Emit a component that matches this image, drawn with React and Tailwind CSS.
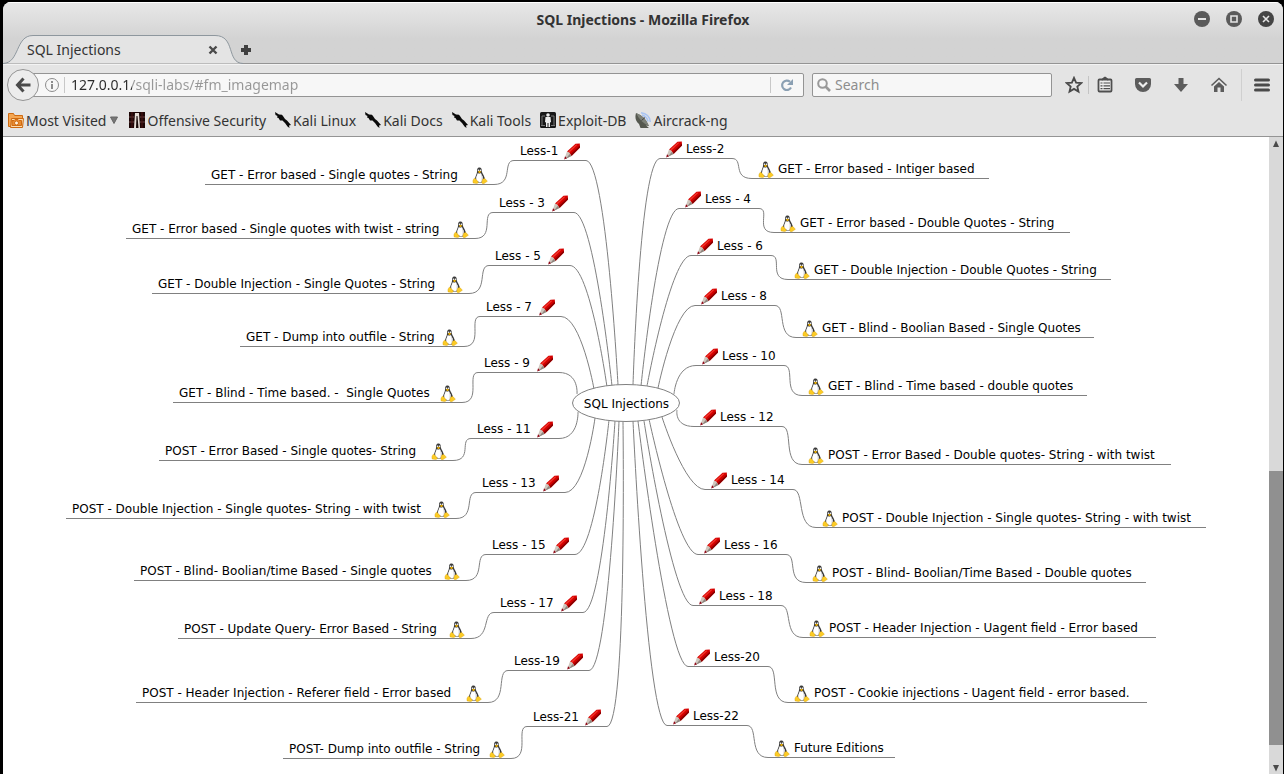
const LEFT = [
  { label: 'Less-1', x1: 511, x2: 583, y: 23, root: [615, 248], text: 'GET - Error based - Single quotes - String', cx1: 202, cx2: 491, cy: 47 },
  { label: 'Less - 3', x1: 490, x2: 571, y: 75, root: [609, 249], text: 'GET - Error based - Single quotes with twist - string', cx1: 123, cx2: 472, cy: 101 },
  { label: 'Less - 5', x1: 486, x2: 567, y: 128, root: [604, 250], text: 'GET - Double Injection - Single Quotes - String', cx1: 149, cx2: 466, cy: 156 },
  { label: 'Less - 7', x1: 477, x2: 558, y: 179, root: [591, 252], text: 'GET - Dump into outfile - String', cx1: 237, cx2: 461, cy: 209 },
  { label: 'Less - 9', x1: 475, x2: 556, y: 235, root: [574, 257], text: 'GET - Blind - Time based. -  Single Quotes', cx1: 170, cx2: 459, cy: 265 },
  { label: 'Less - 11', x1: 468, x2: 556, y: 301, root: [575, 275], text: 'POST - Error Based - Single quotes- String', cx1: 156, cx2: 450, cy: 323 },
  { label: 'Less - 13', x1: 473, x2: 562, y: 355, root: [592, 281], text: 'POST - Double Injection - Single quotes- String - with twist', cx1: 63, cx2: 453, cy: 381 },
  { label: 'Less - 15', x1: 483, x2: 572, y: 417, root: [606, 283], text: 'POST - Blind- Boolian/time Based - Single quotes', cx1: 131, cx2: 463, cy: 443 },
  { label: 'Less - 17', x1: 491, x2: 580, y: 475, root: [612, 284], text: 'POST - Update Query- Error Based - String', cx1: 175, cx2: 468, cy: 501 },
  { label: 'Less-19', x1: 505, x2: 586, y: 533, root: [616, 284], text: 'POST - Header Injection - Referer field - Error based', cx1: 133, cx2: 485, cy: 565 },
  { label: 'Less-21', x1: 524, x2: 604, y: 589, root: [620, 285], text: 'POST- Dump into outfile - String', cx1: 280, cx2: 508, cy: 621 },
]

const RIGHT = [
  { label: 'Less-2', x1: 657, x2: 729, y: 21, root: [630, 248], text: 'GET - Error based - Intiger based', cx1: 749, cx2: 986, cy: 41 },
  { label: 'Less - 4', x1: 676, x2: 756, y: 71, root: [638, 249], text: 'GET - Error based - Double Quotes - String', cx1: 771, cx2: 1067, cy: 95 },
  { label: 'Less - 6', x1: 688, x2: 768, y: 118, root: [644, 249], text: 'GET - Double Injection - Double Quotes - String', cx1: 785, cx2: 1108, cy: 142 },
  { label: 'Less - 8', x1: 692, x2: 772, y: 168, root: [655, 251], text: 'GET - Blind - Boolian Based - Single Quotes', cx1: 793, cx2: 1091, cy: 200 },
  { label: 'Less - 10', x1: 693, x2: 781, y: 228, root: [671, 257], text: 'GET - Blind - Time based - double quotes', cx1: 799, cx2: 1084, cy: 258 },
  { label: 'Less - 12', x1: 691, x2: 779, y: 289, root: [674, 273], text: 'POST - Error Based - Double quotes- String - with twist', cx1: 799, cx2: 1168, cy: 327 },
  { label: 'Less - 14', x1: 702, x2: 790, y: 352, root: [659, 280], text: 'POST - Double Injection - Single quotes- String - with twist', cx1: 813, cx2: 1203, cy: 390 },
  { label: 'Less - 16', x1: 695, x2: 783, y: 417, root: [646, 282], text: 'POST - Blind- Boolian/Time Based - Double quotes', cx1: 803, cx2: 1143, cy: 445 },
  { label: 'Less - 18', x1: 690, x2: 778, y: 468, root: [641, 284], text: 'POST - Header Injection - Uagent field - Error based', cx1: 800, cx2: 1153, cy: 500 },
  { label: 'Less-20', x1: 685, x2: 765, y: 529, root: [635, 284], text: 'POST - Cookie injections - Uagent field - error based.', cx1: 785, cx2: 1144, cy: 565 },
  { label: 'Less-22', x1: 664, x2: 744, y: 588, root: [630, 284], text: 'Future Editions', cx1: 765, cx2: 892, cy: 620 },
]

const BOOKMARKS = [
  { label: 'Offensive Security', Icon: OffsecIcon },
  { label: 'Kali Linux', Icon: KaliIcon },
  { label: 'Kali Docs', Icon: KaliIcon },
  { label: 'Kali Tools', Icon: KaliIcon },
  { label: 'Exploit-DB', Icon: ExploitIcon },
  { label: 'Aircrack-ng', Icon: AircrackIcon },
]

export default function App() {
  return (
    <div className="h-screen bg-black pt-0.5 pl-[3px] pr-px font-['Noto_Sans','Open_Sans',sans-serif] text-[14px] text-[#333]">
      <div className="flex flex-col h-full rounded-t-lg overflow-hidden bg-[#e4e4e4]">
        <TitleBar />
        <NavBar />
        <BookmarksBar />
        <div className="flex flex-1 min-h-0">
          <MindMap />
          <Scrollbar />
        </div>
      </div>
    </div>
  )
}

function TitleBar() {
  return (
    <header className="border-b border-[#949494] bg-linear-to-b from-[#e8e8e8] to-[#d3d3d3] to-60%">
      <div className="relative flex items-center justify-end h-[33px] px-[9px] border-t border-white">
        <h1 className="absolute inset-x-0 text-center font-bold pointer-events-none">SQL Injections - Mozilla Firefox</h1>
        <div className="flex gap-4">
          <WindowButton label="Minimize" fill="#5a5a5a"><path d="M4 8h8" strokeWidth="2" /></WindowButton>
          <WindowButton label="Maximize" fill="#5a5a5a"><path d="M5 5h6v6H5z" strokeWidth="1.6" /></WindowButton>
          <WindowButton label="Close" fill="#444"><path d="M5 5l6 6M11 5l-6 6" strokeWidth="1.6" /></WindowButton>
        </div>
      </div>
      {/* Tab strip */}
      <div className="flex items-center h-[29px] -mb-px">
        <div className="relative flex items-center justify-between w-[237px] h-full pl-6 pr-[21px]">
          <svg className="absolute inset-0" width="240" height="29" viewBox="0 0 240 29" aria-hidden="true">
            <path d="M0 28.5C17 28 12 .5 30 .5H212C233 .5 223 28 240 28.5" fill="#e4e4e4" stroke="#8e979e" />
          </svg>
          <span className="relative">SQL Injections</span>
          <button aria-label="Close tab" className="relative">
            <svg width="12" height="12" viewBox="0 0 12 12"><path d="M2.5 2.5l7 7M9.5 2.5l-7 7" stroke="#4a4a4a" strokeWidth="2.4" /></svg>
          </button>
        </div>
        <button aria-label="New tab">
          <svg width="12" height="12" viewBox="0 0 12 12"><path d="M6 1v10M1 6h10" stroke="#404040" strokeWidth="4" /></svg>
        </button>
      </div>
    </header>
  )
}

function WindowButton({ label, fill, children }) {
  return (
    <button aria-label={label}>
      <svg width="16" height="16" viewBox="0 0 16 16" fill="none" stroke="#e4e4e4">
        <circle cx="8" cy="8" r="8" fill={fill} stroke="none" />
        {children}
      </svg>
    </button>
  )
}

function NavBar() {
  return (
    <nav className="flex items-center h-10 pl-1 pr-[9px] border-t border-[#f3f3f3]">
      <button aria-label="Back" className="relative flex items-center justify-center size-8 rounded-full border border-[#949494] bg-[#ececec]">
        <svg width="16" height="16" viewBox="0 0 16 16" fill="none" stroke="#4a4a4a" strokeWidth="3"><path d="M8.5 1.5L2.5 8l6 6.5M3 8h12.5" /></svg>
      </button>
      {/* Address field tucks under the round back button */}
      <div className="flex flex-1 items-center h-6 -ml-4 pl-5 border border-[#949494] rounded-xs bg-[#f7f7f7]">
        <svg width="16" height="16" viewBox="0 0 16 16" fill="none" stroke="#8c8c8c"><circle cx="8" cy="8" r="6.5" /><path d="M8 4v2M8 7v5" strokeWidth="2" /></svg>
        <span className="w-px h-4 ml-1 mr-1.5 bg-[#c8c8c8]" />
        <input
          aria-label="Address"
          defaultValue="127.0.0.1/sqli-labs/#fm_imagemap"
          className="flex-1 min-w-0 outline-none text-transparent bg-clip-text bg-[linear-gradient(to_right,#2a2a2a_61px,#979797_61px)]"
        />
        <span className="w-px h-4 bg-[#c8c8c8]" />
        <button aria-label="Reload" className="flex justify-center w-8">
          <svg width="14" height="14" viewBox="0 0 14 14"><path d="M11 9.5A4.7 4.7 0 1 1 10 3.8" fill="none" stroke="#8ba0b3" strokeWidth="2.2" /><path d="M13 1v6H7z" fill="#8ba0b3" /></svg>
        </button>
      </div>
      <label className="flex items-center gap-1 w-60 h-6 ml-2 mr-3 px-1 border border-[#949494] rounded-xs bg-[#f7f7f7]">
        <svg width="14" height="14" viewBox="0 0 14 14" fill="none" stroke="#999"><circle cx="5.5" cy="5.5" r="4.3" strokeWidth="2" /><path d="M8.5 8.5l4.5 4.5" strokeWidth="2.6" /></svg>
        <input aria-label="Search" placeholder="Search" className="flex-1 min-w-0 outline-none placeholder:text-[#8e8e8e]" />
      </label>
      <div className="flex items-center">
        <ToolButton label="Bookmark this page" className="w-5">
          <path d="M9 1.8l2.1 4.8 5.1.5-3.9 3.4 1.2 5.1L9 12.9l-4.5 2.7 1.2-5.1-3.9-3.4 5.1-.5z" fill="none" stroke="#4a4a4a" strokeWidth="1.8" />
        </ToolButton>
        <span className="w-px h-[18px] mx-1 bg-[#c4c4c4]" />
        <ToolButton label="Bookmarks list" className="w-6">
          <path d="M3.500 3.500h2.500L9 1.500l3 2h2.500q1 0 1 1v10q0 1-1 1h-11q-1 0-1-1v-10q0-1 1-1z" fill="#eee" stroke="#4f4f4f" strokeWidth="1.800" />
          <path d="M5.500 4.500L9 1.500l3.500 3z" fill="#4f4f4f" />
          <path d="M4.500 7h2M7.500 7H14M4.500 9.800h2M7.500 9.800H14M4.500 12.600h2M7.500 12.600H14" stroke="#4f4f4f" strokeWidth="1.200" />
        </ToolButton>
        <ToolButton label="Pocket" className="w-6 ml-3.5">
          <path d="M2.5 2h13Q17 2 17 3.5V8a8 8 0 0 1-16 0V3.5Q1 2 2.5 2z" fill="#5c5c5c" />
          <path d="M5 6.5l4 4 4-4" fill="none" stroke="#eee" strokeWidth="2.2" />
        </ToolButton>
        <ToolButton label="Downloads" className="w-6 ml-3.5">
          <path d="M6.5 2h5v6H16l-7 8-7-8h4.5z" fill="#5c5c5c" />
        </ToolButton>
        <ToolButton label="Home" className="w-6 ml-3.5">
          <path d="M1.5 9.5L9 2.500l7.500 7" fill="none" stroke="#5c5c5c" strokeWidth="1.600" />
          <path d="M4 10.500l5-4.600 5 4.600V16h-3.500v-4.500h-3V16H4z" fill="#5c5c5c" />
        </ToolButton>
        <span className="w-px h-8 ml-2.5 mr-2 bg-[#cfcfcf]" />
        <ToolButton label="Menu" className="w-6">
          <path d="M2.5 4h13M2.5 9h13M2.5 14h13" stroke="#4a4a4a" strokeWidth="3" strokeLinecap="round" />
        </ToolButton>
      </div>
    </nav>
  )
}

function ToolButton({ label, className, children }) {
  return (
    <button aria-label={label} className={`flex justify-center ${className}`}>
      <svg className="shrink-0" width="18" height="18" viewBox="0 0 18 18">{children}</svg>
    </button>
  )
}

function BookmarksBar() {
  return (
    <div className="flex items-center gap-[9px] h-[33px] pl-[5px] border-b border-[#949494] whitespace-nowrap">
      <button className="flex items-center gap-0.5 mr-0.5">
        <MostVisitedIcon />
        Most Visited
        <svg className="ml-0.5" width="8" height="8" viewBox="0 0 8 8"><path d="M.5 1h7L4 7.5z" fill="#777" stroke="#666" /></svg>
      </button>
      {BOOKMARKS.map(({ label, Icon }) => (
        <a key={label} href="#" className="flex items-center gap-0.5">
          <Icon />
          {label}
        </a>
      ))}
    </div>
  )
}

function MindMap() {
  return (
    <main className="relative flex-1 overflow-hidden bg-white font-['DejaVu_Sans',sans-serif] text-[12px] text-black">
      <svg className="absolute inset-0 size-full" fill="none" stroke="#808080" aria-hidden="true">
        {LEFT.map((n) => (
          <path key={n.label} d={`${rootEdge(n, n.x2, 1)}${childEdge(n.x1, n.y, n.cx2, n.cy, -1)}`} />
        ))}
        {RIGHT.map((n) => (
          <path key={n.label} d={`${rootEdge(n, n.x1, -1)}${childEdge(n.x2, n.y, n.cx1, n.cy, 1)}`} />
        ))}
        <ellipse cx="623" cy="266" rx="53.5" ry="18.5" fill="#fff" />
      </svg>
      <a href="#root" className="absolute left-[570px] top-[258px] w-[107px] text-center leading-[18px]">SQL Injections</a>
      {LEFT.map((n) => (
        <div key={n.label}>
          <Node x1={n.x1} x2={n.x2} y={n.y} className="justify-between">{n.label}<Pencil /></Node>
          <Node x1={n.cx1} x2={n.cx2} y={n.cy} className="justify-between">{n.text}<Penguin /></Node>
        </div>
      ))}
      {RIGHT.map((n) => (
        <div key={n.label}>
          <Node x1={n.x1} x2={n.x2} y={n.y} className="gap-1"><Pencil />{n.label}</Node>
          <Node x1={n.cx1} x2={n.cx2} y={n.cy} className="gap-1"><Penguin />{n.text}</Node>
        </div>
      ))}
    </main>
  )
}

// dir is the horizontal direction from the start of the curve to its end
function rootEdge(n, x, dir) {
  const [rx, ry] = n.root
  const y = n.y + 0.5
  return `M${rx} ${ry}C${rx} ${ry} ${x + 20 * dir} ${y} ${x} ${y}`
}

function childEdge(x, y, cx, cy, dir) {
  return `M${x} ${y + 0.5}C${x + 12 * dir} ${y + 0.5} ${cx - 20 * dir} ${cy + 0.5} ${cx} ${cy + 0.5}`
}

function Node({ x1, x2, y, className, children }) {
  return (
    <a
      href="#fm_imagemap"
      className={`absolute flex items-center h-[19px] px-1.5 border-b border-[#808080] whitespace-pre ${className}`}
      style={{ left: x1, width: x2 - x1, top: y - 18 }}
    >
      {children}
    </a>
  )
}

function Pencil() {
  return (
    <svg className="shrink-0" width="16" height="17" viewBox="0 0 16 17" aria-hidden="true">
      <path d="M3 8.5L11.5.8 15.8.5 16 4.5 7.5 13z" fill="#d40000" />
      <path d="M4.2 8.5L12 1.5l1.4.3L5.4 9.6z" fill="#f2372c" />
      <path d="M7.5 13L16 4.5 15.8 2.5 6.3 11.5z" fill="#8a0000" />
      <path d="M3 8.5l2.3 1 2.2 3.5L2.5 15.5 1 14z" fill="#cfc6bd" />
      <path d="M7.5 13L2 15.8 5.6 11z" fill="#8e857e" />
      <path d="M1 13.2l2 2L.2 16.4z" fill="#8d0010" />
    </svg>
  )
}

function Penguin() {
  return (
    <svg className="shrink-0" width="16" height="17" viewBox="0 0 16 17" aria-hidden="true">
      <path d="M7.200.5C9.200.3 9.800 1.800 9.800 4c0 2 3.200 5 3.200 9L11 15.500H5L3 13C2.800 9.500 5 7 5.100 4.500 4.900 2 5.500.7 7.200.5z" fill="#3a3a3a" />
      <path d="M5.800 6Q7.500 7.200 8.800 6 11.400 9.500 11.200 14L8 15.300 4.200 14Q3.400 10 5.800 6z" fill="#fff" />
      <path d="M8.800 6Q11.400 9.500 11.200 14L9.500 14.700Q10.300 10 8.800 6z" fill="#c9c9cf" />
      <circle cx="6.500" cy="3.200" r=".8" fill="#fff" /><circle cx="8.500" cy="3.200" r=".8" fill="#fff" />
      <path d="M5.800 4.800L7.500 3.800 9.300 4.800 7.500 6.300z" fill="#eeb000" />
      <path d="M2.600 11L4.800 13 6.400 15.300Q5.700 16.900 4 16.500L1 15.900Q.5 13.500 1.500 12.300zM12.300 11.300L14 12.500 15.400 14.300 12.200 16.500Q10.300 17 9.700 15.800L10.400 12.600z" fill="#fccb25" stroke="#c99208" strokeWidth=".3" />
    </svg>
  )
}

function Scrollbar() {
  return (
    <div className="flex flex-col items-center w-3.5 bg-[#d9d9d9]" aria-hidden="true">
      <svg className="my-[3px]" width="8" height="8" viewBox="0 0 8 8"><path d="M4 .5L7 7H1z" fill="#4a4a4a" /></svg>
      <div className="flex-[320]" />
      <div className="flex-[274] w-full bg-[#909090]" />
      <div className="flex-[17]" />
      <svg className="my-0.5" width="8" height="8" viewBox="0 0 8 8"><path d="M4 7.500L7 1H1z" fill="#4a4a4a" /></svg>
    </div>
  )
}

function MostVisitedIcon() {
  return (
    <svg width="16" height="16" viewBox="0 0 16 16" fill="none" stroke="#cf6a10" aria-hidden="true">
      <path d="M.5 14.500V1.500h5l1 2h8v11z" fill="#f4a652" />
      <path d="M2.500 15.500l1-9h12l-1 9z" fill="#fbdcb0" />
      <path d="M4 8.500h2l1-1h3l1 1h2.500v5H4z" fill="#e88a30" />
      <circle cx="8.500" cy="11" r="2" fill="#fff3e0" />
    </svg>
  )
}

function OffsecIcon() {
  return (
    <svg width="16" height="16" viewBox="0 0 16 16" aria-hidden="true">
      <path d="M0 0h16v16H0z" fill="#1c0606" />
      <path d="M0 5h5M0 10h5M11 5h5M11 10h5" stroke="#6b4444" />
      <path d="M3 0v16M13 0v16" stroke="#4a1515" />
      <path d="M6 1h4l1 15H5z" fill="#e6ddd6" />
      <path d="M7.500 4h1l1 12H7z" fill="#1a0c0a" />
    </svg>
  )
}

function KaliIcon() {
  return (
    <svg width="16" height="16" viewBox="0 0 16 16" aria-hidden="true">
      <path d="M0 0l4 2.500 3 .2 1.500 2L10 7l2 1.500L16 13l-2 .5.500 2.500-2-1.500L10 11 7.500 8.500 5 8.500 3.500 6 2 5.500 2.500 4 .5 3z" fill="#0a0a0a" />
    </svg>
  )
}

function ExploitIcon() {
  return (
    <svg width="16" height="16" viewBox="0 0 16 16" aria-hidden="true">
      <rect width="16" height="16" rx="1.500" fill="#181818" />
      <path d="M2 14V4h3M14 14V4h-3M1 13.500h4M11 13.500h4" fill="none" stroke="#777" />
      <circle cx="8" cy="3" r="1.800" fill="#eee" />
      <path d="M5.500 5h5l.5 5-1 .5V15H8.500v-4h-1v4H6v-4.500L5 10z" fill="#eee" />
    </svg>
  )
}

function AircrackIcon() {
  return (
    <svg width="16" height="16" viewBox="0 0 16 16" fill="none" aria-hidden="true">
      <path d="M6 .8q8.500 1 9.300 9.200M7 3q5 1.500 6 6.500" stroke="#a9c4f2" strokeWidth="1.500" />
      <path d="M1 1Q-1 8 4 12l1.500 4H14l-3-2.500 3 .5Q10 4 1 1z" fill="#55584f" />
      <path d="M1 1q9 3 13 13Q5 10 1 1z" fill="#7d8178" />
      <path d="M6.500 8.500L10 5.500" stroke="#444" />
    </svg>
  )
}
